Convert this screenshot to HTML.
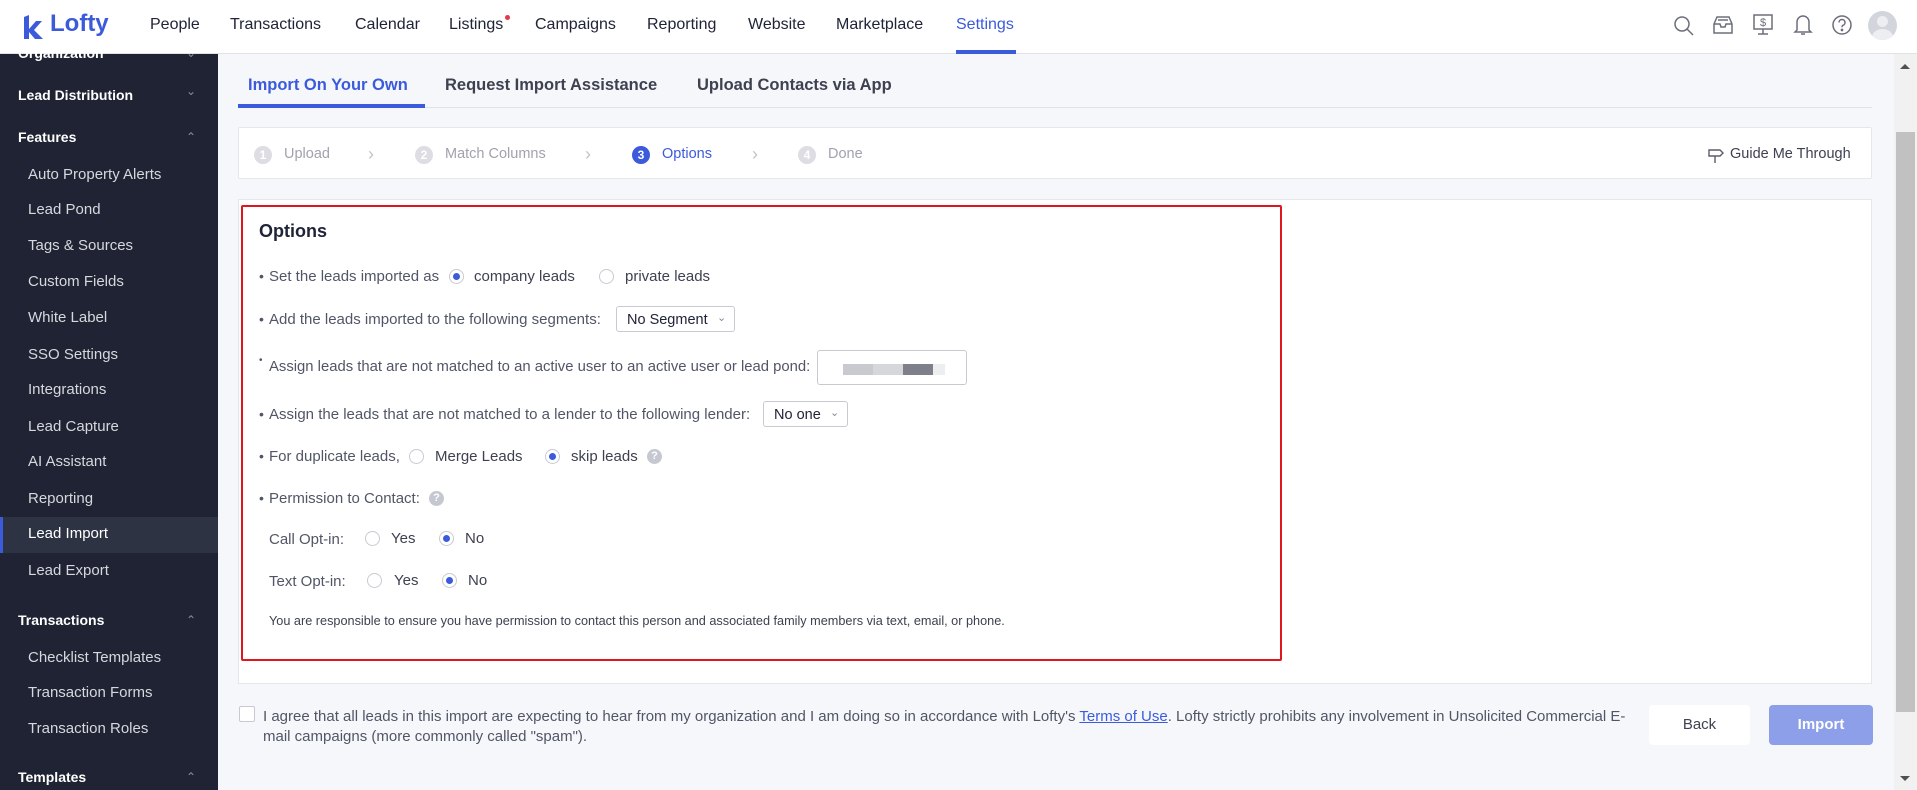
<!DOCTYPE html>
<html><head><meta charset="utf-8"><style>
*{box-sizing:border-box;margin:0;padding:0}
body{width:1917px;height:790px;overflow:hidden;background:#f6f7fb;font-family:"Liberation Sans",sans-serif;position:relative;color:#202437}
.a{position:absolute;white-space:nowrap}
.hdr{position:absolute;left:0;top:0;width:1917px;height:54px;background:#fff;border-bottom:1px solid #e1e2e6}
.nav{position:absolute;top:16px;font-size:16px;color:#202437}
.side{position:absolute;left:0;top:54px;width:218px;height:736px;background:#1f2333}
.sh{position:absolute;left:18px;font-size:14px;font-weight:bold;color:#fff}
.si{position:absolute;left:28px;font-size:15px;color:#d6d8de}
.chev{position:absolute;left:186px;font-size:12px;color:#8a8e9b}
.row{position:absolute;left:269px;font-size:15px;color:#515666}
.bul{position:absolute;left:259px;font-size:14px;color:#515666}
.rad{position:absolute;width:15px;height:15px;border:1px solid #c8cad2;border-radius:50%;background:#fff}
.rad.on:after{content:"";position:absolute;left:3px;top:3px;width:7px;height:7px;border-radius:50%;background:#3b5bdb}
.q{position:absolute;width:15px;height:15px;border-radius:50%;background:#c5c8d0;color:#fff;font-size:11px;text-align:center;line-height:15px;font-weight:bold}
.sel{position:absolute;border:1px solid #c8cad2;border-radius:3px;background:#fff;font-size:14.5px;color:#202437}
.stp{position:absolute;top:146px;width:18px;height:18px;border-radius:50%;background:#dcdee3;color:#fff;font-size:12px;text-align:center;line-height:18px;font-weight:bold}
.stt{position:absolute;top:146px;font-size:14.5px;color:#a0a3ad}
.gt{position:absolute;top:144px;font-size:18px;color:#c0c3ca}
.tab{position:absolute;top:76px;font-size:16.5px;font-weight:bold;color:#3d4150}
</style></head><body>
<div class="hdr">
 <svg class="a" style="left:22px;top:15px" width="22" height="24" viewBox="0 0 22 24"><path d="M2 2 L7 0 L7 14 L14 6 L20 6 L12 15 L21 24 L13 24 L7 17 L7 24 L2 24Z" fill="#3b5bdb"/></svg>
 <div class="a" style="left:50px;top:10px;font-size:24px;font-weight:bold;color:#3b5bdb">Lofty</div>
 <div class="nav" style="left:150px">People</div>
 <div class="nav" style="left:230px">Transactions</div>
 <div class="nav" style="left:355px">Calendar</div>
 <div class="nav" style="left:449px">Listings</div>
 <div class="a" style="left:505px;top:15px;width:5px;height:5px;border-radius:50%;background:#e5384a"></div>
 <div class="nav" style="left:535px">Campaigns</div>
 <div class="nav" style="left:647px">Reporting</div>
 <div class="nav" style="left:748px">Website</div>
 <div class="nav" style="left:836px">Marketplace</div>
 <div class="nav" style="left:956px;color:#3b5bdb">Settings</div>
 <div class="a" style="left:956px;top:50px;width:60px;height:4px;background:#3b5bdb"></div>
 <svg class="a" style="left:1672px;top:14px" width="24" height="24" viewBox="0 0 24 24" fill="none" stroke="#6b6f7b" stroke-width="1.5"><circle cx="10" cy="10" r="7"/><path d="M15 15 L21 21"/></svg>
 <svg class="a" style="left:1712px;top:14px" width="22" height="22" viewBox="0 0 22 22" fill="none" stroke="#6b6f7b" stroke-width="1.5"><path d="M5 3h12l3 7v9H2v-9z M2 10h6l1 3h4l1-3h6 M6 6h10"/></svg>
 <svg class="a" style="left:1752px;top:13px" width="22" height="24" viewBox="0 0 22 24" fill="none" stroke="#6b6f7b" stroke-width="1.5"><rect x="2" y="2" width="18" height="14"/><path d="M11 16v5 M6 21h10"/><text x="11" y="13" font-size="11" text-anchor="middle" fill="#6b6f7b" stroke="none" font-family="Liberation Sans">$</text></svg>
 <svg class="a" style="left:1792px;top:13px" width="22" height="24" viewBox="0 0 22 24" fill="none" stroke="#6b6f7b" stroke-width="1.5"><path d="M5 17V9a6 6 0 0 1 12 0v8l2 2H3z M9 21h4"/></svg>
 <svg class="a" style="left:1831px;top:14px" width="22" height="22" viewBox="0 0 22 22" fill="none" stroke="#6b6f7b" stroke-width="1.5"><circle cx="11" cy="11" r="9"/><path d="M8 8.5a3 3 0 1 1 4 2.8c-1 .4-1 1-1 2"/><circle cx="11" cy="16" r=".6" fill="#6b6f7b"/></svg>
 <div class="a" style="left:1868px;top:11px;width:29px;height:29px;border-radius:50%;background:#d3d5dc;overflow:hidden"><div class="a" style="left:9px;top:5px;width:11px;height:11px;border-radius:50%;background:#eceef2"></div><div class="a" style="left:4px;top:18px;width:21px;height:16px;border-radius:50%;background:#eceef2"></div></div>
</div>
<div class="side">
 <div class="sh" style="top:-9px">Organization</div><div class="chev" style="top:-8px">&#8964;</div>
 <div class="sh" style="top:33px">Lead Distribution</div><div class="chev" style="top:30px">&#8964;</div>
 <div class="sh" style="top:75px">Features</div><div class="chev" style="top:76px">&#8963;</div>
 <div class="si" style="top:112px">Auto Property Alerts</div>
 <div class="si" style="top:147px">Lead Pond</div>
 <div class="si" style="top:183px">Tags &amp; Sources</div>
 <div class="si" style="top:219px">Custom Fields</div>
 <div class="si" style="top:255px">White Label</div>
 <div class="si" style="top:292px">SSO Settings</div>
 <div class="si" style="top:327px">Integrations</div>
 <div class="si" style="top:364px">Lead Capture</div>
 <div class="si" style="top:399px">AI Assistant</div>
 <div class="si" style="top:436px">Reporting</div>
 <div class="a" style="left:0;top:463px;width:218px;height:36px;background:#2e3344;border-left:3px solid #3b5bdb"></div>
 <div class="si" style="top:471px;color:#fff">Lead Import</div>
 <div class="si" style="top:508px">Lead Export</div>
 <div class="sh" style="top:558px">Transactions</div><div class="chev" style="top:559px">&#8963;</div>
 <div class="si" style="top:595px">Checklist Templates</div>
 <div class="si" style="top:630px">Transaction Forms</div>
 <div class="si" style="top:666px">Transaction Roles</div>
 <div class="sh" style="top:715px">Templates</div><div class="chev" style="top:716px">&#8963;</div>
</div>
<!-- tabs -->
<div class="a" style="left:238px;top:107px;width:1634px;height:1px;background:#e1e2e6"></div>
<div class="tab" style="left:248px;color:#3b5bdb">Import On Your Own</div>
<div class="tab" style="left:445px">Request Import Assistance</div>
<div class="tab" style="left:697px">Upload Contacts via App</div>
<div class="a" style="left:238px;top:104px;width:187px;height:4px;background:#3b5bdb"></div>
<!-- stepper -->
<div class="a" style="left:238px;top:127px;width:1634px;height:52px;background:#fff;border:1px solid #e6e7eb;border-radius:2px"></div>
<div class="stp" style="left:254px">1</div><div class="stt" style="left:284px">Upload</div><div class="gt" style="left:368px">&#8250;</div>
<div class="stp" style="left:415px">2</div><div class="stt" style="left:445px">Match Columns</div><div class="gt" style="left:585px">&#8250;</div>
<div class="stp" style="left:632px;background:#3b5bdb">3</div><div class="stt" style="left:662px;color:#3b5bdb">Options</div><div class="gt" style="left:752px">&#8250;</div>
<div class="stp" style="left:798px">4</div><div class="stt" style="left:828px">Done</div>
<svg class="a" style="left:1707px;top:146px" width="18" height="18" viewBox="0 0 18 18" fill="none" stroke="#5a5e6b" stroke-width="1.4"><path d="M2 4h11l3 3-3 3H2z M8 10v7"/></svg>
<div class="a" style="left:1730px;top:146px;font-size:14.5px;color:#3d4150">Guide Me Through</div>
<!-- card -->
<div class="a" style="left:238px;top:199px;width:1634px;height:485px;background:#fff;border:1px solid #e6e7eb"></div>
<div class="a" style="left:241px;top:205px;width:1041px;height:456px;border:2px solid #e0161e;border-radius:2px"></div>
<div class="a" style="left:259px;top:221px;font-size:18px;font-weight:bold;color:#202437">Options</div>

<div class="bul" style="top:268px">&#8226;</div><div class="row" style="top:268px">Set the leads imported as</div>
<div class="rad on" style="left:449px;top:269px"></div><div class="row" style="left:474px;top:268px;color:#3d4150">company leads</div>
<div class="rad" style="left:599px;top:269px"></div><div class="row" style="left:625px;top:268px;color:#3d4150">private leads</div>

<div class="bul" style="top:311px">&#8226;</div><div class="row" style="top:311px">Add the leads imported to the following segments:</div>
<div class="sel" style="left:616px;top:306px;width:119px;height:26px"><span class="a" style="left:10px;top:5px">No Segment</span><span class="a" style="left:100px;top:4px;font-size:11px;color:#888">&#8964;</span></div>

<div class="bul" style="top:355px;font-size:10px">&#8226;</div><div class="row" style="top:359px;font-size:14.85px">Assign leads that are not matched to an active user to an active user or lead pond:</div>
<div class="sel" style="left:817px;top:350px;width:150px;height:35px"><div class="a" style="left:25px;top:13px;width:40px;height:11px;background:#c8cacf"></div><div class="a" style="left:55px;top:13px;width:30px;height:11px;background:#d6d7da"></div><div class="a" style="left:85px;top:13px;width:30px;height:11px;background:#7d808a"></div><div class="a" style="left:115px;top:13px;width:12px;height:11px;background:#eceef0"></div></div>

<div class="bul" style="top:406px">&#8226;</div><div class="row" style="top:406px">Assign the leads that are not matched to a lender to the following lender:</div>
<div class="sel" style="left:763px;top:401px;width:85px;height:26px"><span class="a" style="left:10px;top:5px">No one</span><span class="a" style="left:66px;top:4px;font-size:11px;color:#888">&#8964;</span></div>

<div class="bul" style="top:448px">&#8226;</div><div class="row" style="top:448px">For duplicate leads,</div>
<div class="rad" style="left:409px;top:449px"></div><div class="row" style="left:435px;top:448px;color:#3d4150">Merge Leads</div>
<div class="rad on" style="left:545px;top:449px"></div><div class="row" style="left:571px;top:448px;color:#3d4150">skip leads</div>
<div class="q" style="left:647px;top:449px">?</div>

<div class="bul" style="top:490px">&#8226;</div><div class="row" style="top:490px">Permission to Contact:</div>
<div class="q" style="left:429px;top:491px">?</div>

<div class="row" style="top:531px">Call Opt-in:</div>
<div class="rad" style="left:365px;top:531px"></div><div class="row" style="left:391px;top:530px;color:#3d4150">Yes</div>
<div class="rad on" style="left:439px;top:531px"></div><div class="row" style="left:465px;top:530px;color:#3d4150">No</div>
<div class="row" style="top:573px">Text Opt-in:</div>
<div class="rad" style="left:367px;top:573px"></div><div class="row" style="left:394px;top:572px;color:#3d4150">Yes</div>
<div class="rad on" style="left:442px;top:573px"></div><div class="row" style="left:468px;top:572px;color:#3d4150">No</div>
<div class="row" style="top:614px;font-size:12.7px;color:#3d4150">You are responsible to ensure you have permission to contact this person and associated family members via text, email, or phone.</div>

<!-- bottom -->
<div class="a" style="left:239px;top:706px;width:16px;height:16px;border:1px solid #c8cad2;border-radius:2px;background:#fff"></div>
<div class="a" style="left:263px;top:707px;font-size:15px;line-height:20px;color:#515666">I agree that all leads in this import are expecting to hear from my organization and I am doing so in accordance with Lofty's <span style="color:#3b5bdb;text-decoration:underline">Terms of Use</span>. Lofty strictly prohibits any involvement in Unsolicited Commercial E-<br>mail campaigns (more commonly called "spam").</div>
<div class="a" style="left:1649px;top:705px;width:101px;height:40px;background:#fff;border-radius:4px;text-align:center;line-height:40px;font-size:15px;color:#3d4150">Back</div>
<div class="a" style="left:1769px;top:705px;width:104px;height:40px;background:#8c9fe8;border-radius:4px;text-align:center;line-height:40px;font-size:15px;font-weight:bold;color:#fff">Import</div>
<!-- scrollbar -->
<div class="a" style="left:1894px;top:54px;width:23px;height:736px;background:#f1f1f1"></div>
<div class="a" style="left:1896px;top:132px;width:19px;height:580px;background:#c1c1c1"></div>
<div class="a" style="left:1900px;top:64px;width:0;height:0;border-left:5px solid transparent;border-right:5px solid transparent;border-bottom:5px solid #505050"></div>
<div class="a" style="left:1900px;top:776px;width:0;height:0;border-left:5px solid transparent;border-right:5px solid transparent;border-top:5px solid #505050"></div>
</body></html>
